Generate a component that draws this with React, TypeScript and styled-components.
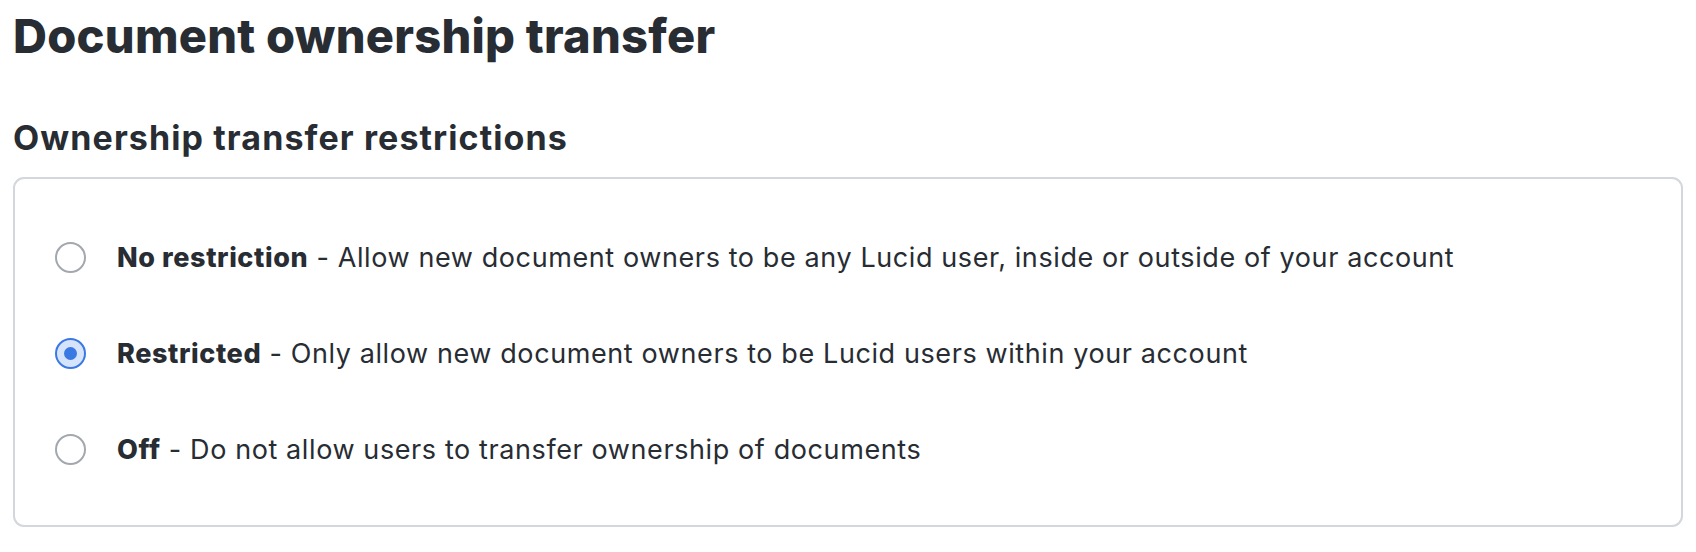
import styled, { createGlobalStyle } from "styled-components";
import { useState } from "react";

const GlobalStyle = createGlobalStyle`
  body {
    margin: 0;
    background: #ffffff;
    font-family: Inter, "Liberation Sans", sans-serif;
    color: #282c33;
  }
`;

const Page = styled.div`
  padding: 4px 13px 0 13px;
`;

const Title = styled.h1`
  margin: 0;
  font-size: 47px;
  line-height: 64px;
  font-weight: 800;
  letter-spacing: 0.25px;
`;

const SubTitle = styled.h2`
  margin: 48px 0 0 0;
  font-size: 34px;
  line-height: 44px;
  font-weight: 700;
  letter-spacing: 1.1px;
`;

const OptionsBox = styled.div`
  margin-top: 17px;
  border: 2px solid #d3d7dc;
  border-radius: 11px;
  padding: 30px 0 28px 40px;
`;

const Row = styled.label`
  display: flex;
  align-items: center;
  gap: 31px;
  height: 96px;
  cursor: pointer;
  font-size: 27px;
  letter-spacing: 0.6px;
`;

const Radio = styled.span<{ $checked: boolean }>`
  box-sizing: border-box;
  width: 31px;
  height: 31px;
  border-radius: 50%;
  flex: none;
  display: flex;
  align-items: center;
  justify-content: center;
  border: 2px solid ${(p) => (p.$checked ? "#3a78e3" : "#a3a8af")};
  background: ${(p) => (p.$checked ? "#d5e3fb" : "#ffffff")};
  &::after {
    content: "";
    display: ${(p) => (p.$checked ? "block" : "none")};
    width: 13px;
    height: 13px;
    border-radius: 50%;
    background: #3a78e3;
  }
`;

const Label = styled.span`
  b {
    font-weight: 800;
    letter-spacing: 0.6px;
  }
`;

const options = [
  {
    key: "none",
    name: "No restriction",
    text: "Allow new document owners to be any Lucid user, inside or outside of your account",
  },
  {
    key: "restricted",
    name: "Restricted",
    text: "Only allow new document owners to be Lucid users within your account",
  },
  {
    key: "off",
    name: "Off",
    text: "Do not allow users to transfer ownership of documents",
  },
];

function App() {
  const [value, setValue] = useState("restricted");

  return (
    <Page>
      <GlobalStyle />
      <Title>Document ownership transfer</Title>
      <SubTitle>Ownership transfer restrictions</SubTitle>
      <OptionsBox>
        {options.map((item) => (
          <Row key={item.key} onClick={() => setValue(item.key)}>
            <Radio $checked={value === item.key} />
            <Label>
              <b>{item.name}</b> - {item.text}
            </Label>
          </Row>
        ))}
      </OptionsBox>
    </Page>
  );
}

export default App;
